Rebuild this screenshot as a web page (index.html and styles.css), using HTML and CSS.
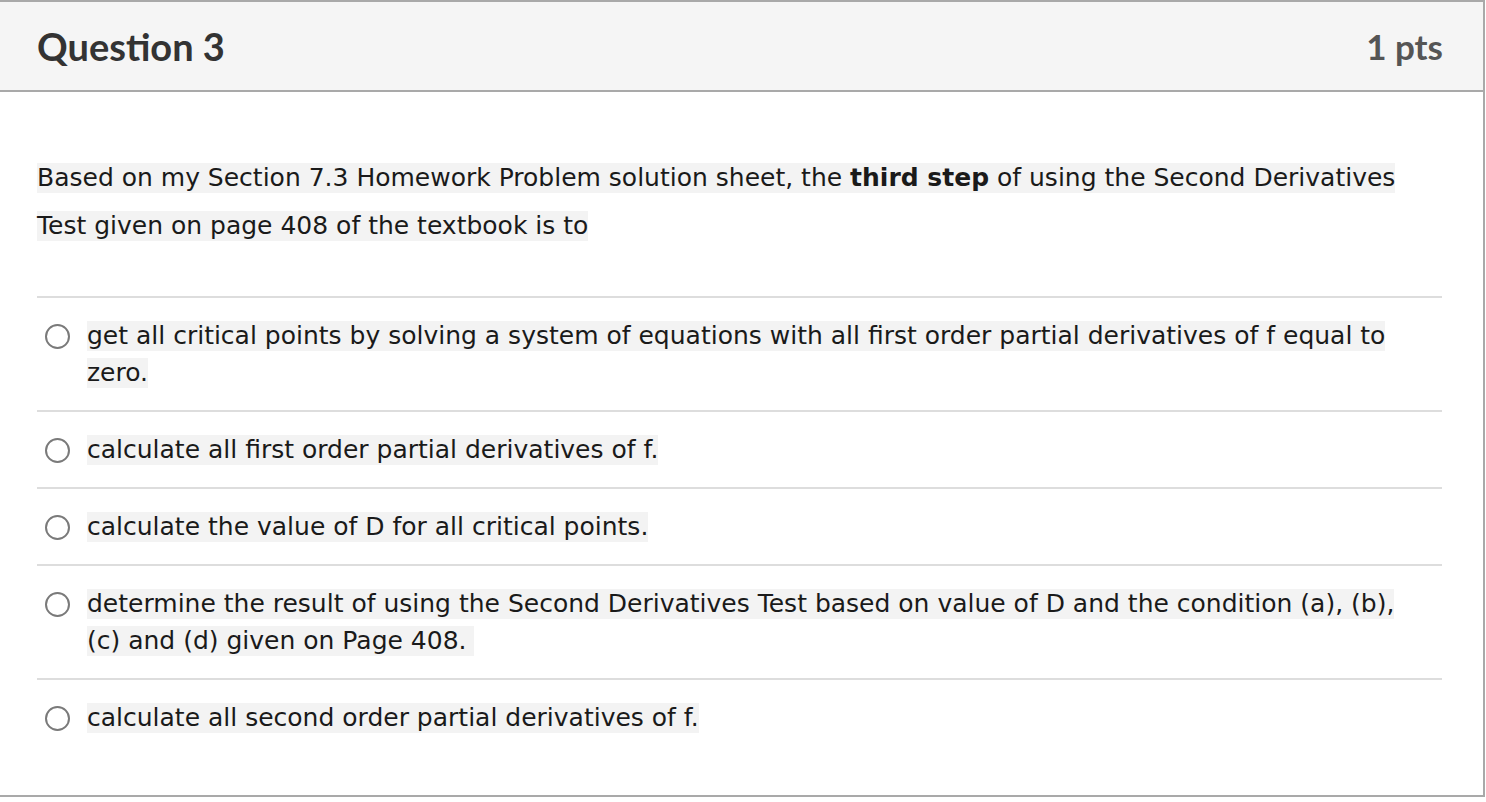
FILE: index.html
```html
<!DOCTYPE html>
<html lang="en">
<head>
<meta charset="utf-8">
<title>Question 3</title>
<link rel="stylesheet" href="styles.css">
</head>
<body>
<div class="question">
  <div class="question-header">
    <h2 class="question-title">Question 3</h2>
    <span class="question-points">1 pts</span>
  </div>
  <div class="question-body">
    <p class="question-text"><span class="hl">Based on my Section 7.3 Homework Problem solution sheet, the <strong>third step</strong> of using the Second Derivatives Test given on page 408 of the textbook is to</span></p>
    <div class="answers">
      <label class="answer">
        <span class="radio"></span>
        <span class="answer-text"><span class="hl">get all critical points by solving a system of equations with all first order partial derivatives of f equal to zero.</span></span>
      </label>
      <label class="answer">
        <span class="radio"></span>
        <span class="answer-text"><span class="hl">calculate all first order partial derivatives of f.</span></span>
      </label>
      <label class="answer">
        <span class="radio"></span>
        <span class="answer-text"><span class="hl">calculate the value of D for all critical points.</span></span>
      </label>
      <label class="answer">
        <span class="radio"></span>
        <span class="answer-text"><span class="hl">determine the result of using the Second Derivatives Test based on value of D and the condition (a), (b), (c) and (d) given on Page 408.&nbsp;</span></span>
      </label>
      <label class="answer">
        <span class="radio"></span>
        <span class="answer-text"><span class="hl">calculate all second order partial derivatives of f.</span></span>
      </label>
    </div>
  </div>
</div>
</body>
</html>
```

FILE: styles.css
```css
* {
  box-sizing: border-box;
}

html, body {
  margin: 0;
  padding: 0;
  background: #ffffff;
}

.question {
  width: 1485px;
  border: 2px solid #a9a9a9;
  border-left: none;
  background: #ffffff;
}

.question-header {
  height: 90px;
  background: #f5f5f5;
  border-bottom: 2px solid #a9a9a9;
  display: flex;
  align-items: center;
  justify-content: space-between;
  padding: 0 40px 0 37px;
}

.question-title {
  margin: 0;
  font-family: Lato, "Liberation Sans", sans-serif;
  font-weight: 700;
  font-size: 38px;
  color: #333333;
}

.question-points {
  font-family: Lato, "Liberation Sans", sans-serif;
  font-weight: 700;
  font-size: 35px;
  color: #555555;
}

.question-body {
  padding: 62px 41px 40px 37px;
  font-family: "DejaVu Sans", Verdana, sans-serif;
  font-size: 25px;
  color: #1a1a1a;
}

.question-text {
  margin: 0;
  max-width: 1380px;
  line-height: 48px;
}

.hl {
  background: #f3f3f3;
  padding: 0 0 1px;
}

.answers {
  margin-top: 46px;
}

.answer {
  display: flex;
  align-items: flex-start;
  gap: 17px;
  padding: 19px 0 19px 8px;
  border-top: 2px solid #dddddd;
  line-height: 37px;
}

.radio {
  flex: none;
  width: 25px;
  height: 25px;
  margin-top: 7px;
  border: 2px solid #7a7a7a;
  border-radius: 50%;
  background: #ffffff;
}

.answer-text {
  flex: none;
  max-width: 1330px;
}
```
